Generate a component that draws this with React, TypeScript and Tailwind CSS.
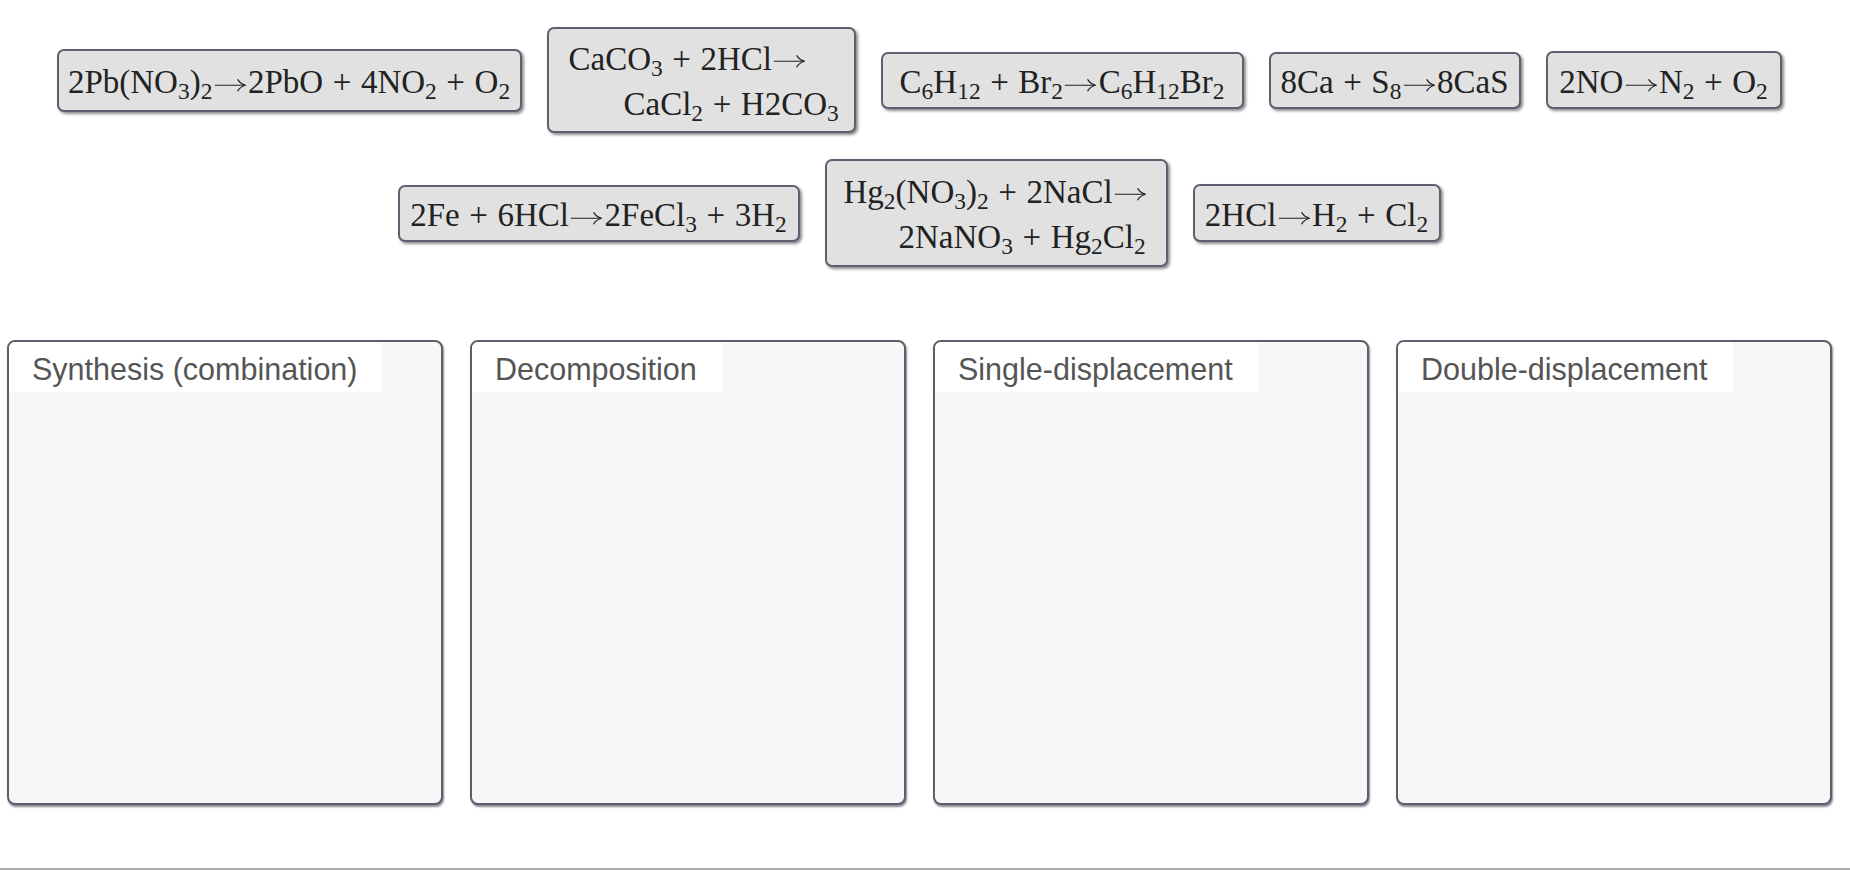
import type { ReactNode } from 'react'

// chemistry notation bits
function S({ children }: { children: ReactNode }) {
  return <span className="text-[0.71em] leading-[0] align-[-0.26em]">{children}</span>
}

function P() {
  return <span className="mx-[0.29em]">+</span>
}

// reaction arrow, drawn thin like the TeX \rightarrow
function Arrow() {
  return (
    <svg
      viewBox="0 0 100 50"
      className="inline-block w-[1em] h-[0.5em] align-[0em] mx-[0.04em]"
      fill="none"
      stroke="currentColor"
      strokeWidth="3.6"
      strokeLinecap="round"
    >
      <path d="M4 25 H93" />
      <path d="M72 8 Q80 21 96 25 Q80 29 72 42" />
    </svg>
  )
}

interface CardProps {
  w: string
  h: string
  children: ReactNode
}

function Card({ w, h, children }: CardProps) {
  return (
    <div
      className={`${w} ${h} shrink-0 flex items-center justify-center whitespace-nowrap rounded-[7px] border-2 border-[#5f5f72] bg-[#e1e1e1] pt-[4px] text-[33px] leading-[38px] text-[#222222] shadow-[2px_2px_3px_rgba(0,0,0,0.45)]`}
      style={{ fontFamily: '"Liberation Serif", "DejaVu Serif", serif' }}
    >
      <div>{children}</div>
    </div>
  )
}

function TwoLineCard({ w, h, first, second, pad }: { w: string; h: string; first: ReactNode; second: ReactNode; pad: string }) {
  return (
    <div
      className={`${w} ${h} ${pad} shrink-0 flex flex-col justify-center whitespace-nowrap rounded-[7px] border-2 border-[#5f5f72] bg-[#e1e1e1] pt-[3px] text-[33px] leading-[45px] text-[#222222] shadow-[2px_2px_3px_rgba(0,0,0,0.45)]`}
      style={{ fontFamily: '"Liberation Serif", "DejaVu Serif", serif' }}
    >
      <div>{first}</div>
      <div className="pl-[55px]">{second}</div>
    </div>
  )
}

function DropZone({ title }: { title: string }) {
  return (
    <div className="w-[436px] h-[465px] shrink-0 overflow-hidden rounded-[8px] border-2 border-[#5d5d6e] bg-[#f7f7f7] shadow-[1px_2px_2px_rgba(40,40,60,0.55)]">
      <div
        className="inline-block h-[50px] bg-white pl-[23px] pr-[25px] pt-[10px] text-[30.5px] leading-[34px] text-[#555555]"
        style={{ fontFamily: '"Liberation Sans", Arial, sans-serif' }}
      >
        {title}
      </div>
    </div>
  )
}

export default function App() {
  return (
    <div className="w-[1850px] h-[890px] overflow-hidden bg-white">
      <div className="pt-[27px] pr-[12px] flex flex-col gap-[26px]">
        <div className="flex justify-center items-center gap-[25px]">
          <Card w="w-[465px]" h="h-[63px]">
            2Pb(NO<S>3</S>)<S>2</S>
            <Arrow />
            2PbO
            <P />
            4NO<S>2</S>
            <P />
            O<S>2</S>
          </Card>
          <TwoLineCard
            w="w-[309px]"
            h="h-[106px]"
            pad="pl-[20px]"
            first={
              <>
                CaCO<S>3</S>
                <P />
                2HCl
                <Arrow />
              </>
            }
            second={
              <>
                CaCl<S>2</S>
                <P />
                H2CO<S>3</S>
              </>
            }
          />
          <Card w="w-[363px]" h="h-[57px]">
            C<S>6</S>H<S>12</S>
            <P />
            Br<S>2</S>
            <Arrow />
            C<S>6</S>H<S>12</S>Br<S>2</S>
          </Card>
          <Card w="w-[252px]" h="h-[57px]">
            8Ca
            <P />
            S<S>8</S>
            <Arrow />
            8CaS
          </Card>
          <Card w="w-[236px]" h="h-[58px]">
            2NO
            <Arrow />
            N<S>2</S>
            <P />
            O<S>2</S>
          </Card>
        </div>

        <div className="flex justify-center items-center gap-[25px]">
          <Card w="w-[402px]" h="h-[57px]">
            2Fe
            <P />
            6HCl
            <Arrow />
            2FeCl<S>3</S>
            <P />
            3H<S>2</S>
          </Card>
          <TwoLineCard
            w="w-[343px]"
            h="h-[108px]"
            pad="pl-[17px]"
            first={
              <>
                Hg<S>2</S>(NO<S>3</S>)<S>2</S>
                <P />
                2NaCl
                <Arrow />
              </>
            }
            second={
              <>
                2NaNO<S>3</S>
                <P />
                Hg<S>2</S>Cl<S>2</S>
              </>
            }
          />
          <Card w="w-[248px]" h="h-[58px]">
            2HCl
            <Arrow />
            H<S>2</S>
            <P />
            Cl<S>2</S>
          </Card>
        </div>
      </div>

      <div className="mt-[73px] pl-[7px] flex gap-[27px]">
        <DropZone title="Synthesis (combination)" />
        <DropZone title="Decomposition" />
        <DropZone title="Single-displacement" />
        <DropZone title="Double-displacement" />
      </div>

      <div className="mt-[63px] h-[2px] bg-[#aaaaaa]" />
    </div>
  )
}
